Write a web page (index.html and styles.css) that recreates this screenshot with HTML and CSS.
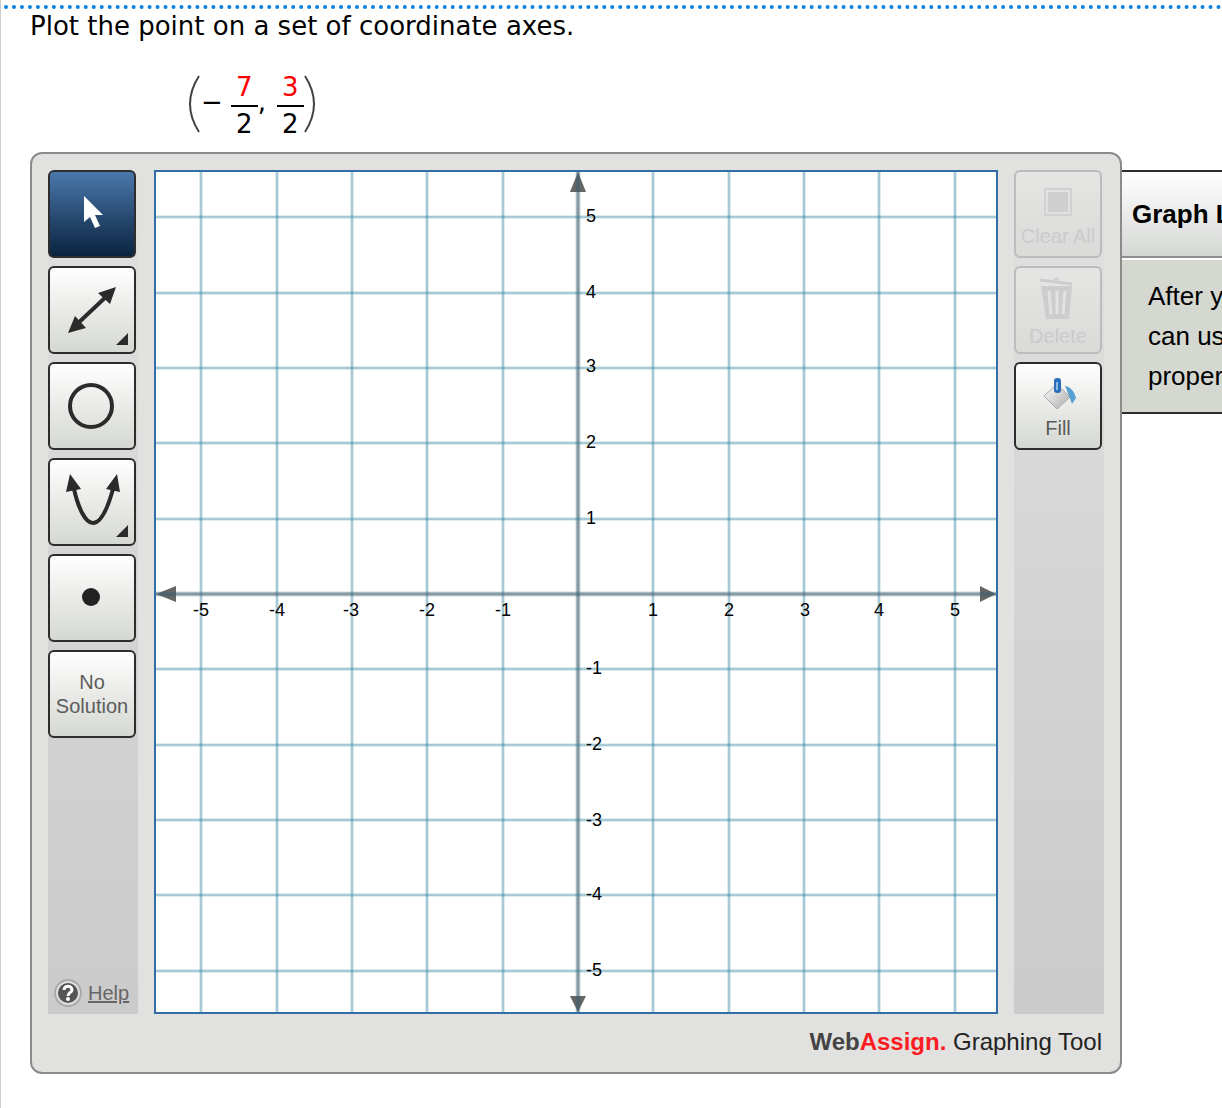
FILE: index.html
```html
<!DOCTYPE html>
<html lang="en">
<head>
<meta charset="utf-8">
<title>Graphing Tool</title>
<link rel="stylesheet" href="styles.css">
</head>
<body>
<main class="question">
  <hr class="rule">
  <p class="prompt">Plot the point on a set of coordinate axes.</p>
  <div class="math">
    <svg class="paren" viewBox="0 0 12 58" aria-hidden="true"><path d="M11 1Q-7 29 11 57" /></svg>
    <span class="sign">−</span>
    <span class="fraction"><span class="num">7</span><span class="den">2</span></span>
    <span class="comma">,</span>
    <span class="fraction"><span class="num">3</span><span class="den">2</span></span>
    <svg class="paren" viewBox="0 0 12 58" aria-hidden="true"><path d="M1 1Q19 29 1 57" /></svg>
  </div>

  <div class="tool">
    <section class="panel">
      <div class="workspace">
        <div class="toolbar">
          <button class="btn selected" type="button" aria-label="Select">
            <svg class="icon" viewBox="0 0 84 84"><path fill="#fff" d="M34 24V50L40 45L45 56L50 54L45 43H53Z"/></svg>
          </button>
          <button class="btn" type="button" aria-label="Line">
            <svg class="icon" viewBox="0 0 84 84"><path stroke="#2b2b2b" stroke-width="4" d="M25 58L59 26"/><path fill="#2b2b2b" d="M66 19L48 25L60 36ZM18 65L25 48L36 60ZM78 65V77H66Z"/></svg>
          </button>
          <button class="btn" type="button" aria-label="Circle">
            <svg class="icon" viewBox="0 0 84 84"><circle cx="41" cy="42" r="21" fill="none" stroke="#2b2b2b" stroke-width="4"/></svg>
          </button>
          <button class="btn" type="button" aria-label="Parabola">
            <svg class="icon" viewBox="0 0 84 84"><path fill="none" stroke="#2b2b2b" stroke-width="4" d="M24 29C28 47 35 63 43 63S58 47 63 29"/><path fill="#2b2b2b" d="M20 14L16 32L31 29ZM67 14L56 29L70 32ZM78 65V77H66Z"/></svg>
          </button>
          <button class="btn" type="button" aria-label="Point">
            <svg class="icon" viewBox="0 0 84 84"><circle cx="41" cy="41" r="9" fill="#222"/></svg>
          </button>
          <button class="btn" type="button">No<br>Solution</button>
          <a class="help" href="#help">
            <svg class="help-icon" viewBox="0 0 28 28" aria-hidden="true">
              <circle cx="14" cy="14" r="13" fill="#ddd" stroke="#aaa" stroke-width="2"/>
              <circle cx="14" cy="14" r="10" fill="#555"/>
              <path fill="none" stroke="#fff" stroke-width="3" d="M10 11C10 6 18 6 18 11C18 14 14 13 14 17"/>
              <circle cx="14" cy="20" r="2" fill="#fff"/>
            </svg>
            <span class="help-text">Help</span>
          </a>
        </div>

        <svg class="graph" viewBox="0 0 840 840" role="img" aria-label="Coordinate axes">
          <defs>
            <path id="columns" d="M45 0V840M121 0V840M196 0V840M271 0V840M347 0V840M497 0V840M573 0V840M648 0V840M723 0V840M799 0V840"/>
            <path id="rows" d="M0 45H840M0 121H840M0 196H840M0 271H840M0 347H840M0 497H840M0 573H840M0 648H840M0 723H840M0 799H840"/>
            <path id="axis-y" d="M422 0V840"/>
            <path id="axis-x" d="M0 422H840"/>
          </defs>
          <use href="#columns" class="grid-soft"/>
          <use href="#columns" class="grid-core"/>
          <path class="heads" d="M422 0L414 20H430ZM422 840L414 824H430ZM0 422L20 414V430ZM840 422L824 414V430Z"/>
          <use href="#axis-y" class="axis-soft"/>
          <use href="#axis-y" class="axis-core"/>
          <use href="#axis-x" class="axis-soft"/>
          <use href="#axis-x" class="axis-core"/>
          <use href="#rows" class="grid-soft"/>
          <use href="#rows" class="grid-core"/>
          <g class="labels labels-x">
            <text x="45" y="444">-5</text><text x="121" y="444">-4</text><text x="195" y="444">-3</text><text x="271" y="444">-2</text><text x="347" y="444">-1</text>
            <text x="497" y="444">1</text><text x="573" y="444">2</text><text x="649" y="444">3</text><text x="723" y="444">4</text><text x="799" y="444">5</text>
          </g>
          <g class="labels">
            <text x="430" y="50">5</text><text x="430" y="126">4</text><text x="430" y="200">3</text><text x="430" y="276">2</text><text x="430" y="352">1</text>
            <text x="430" y="502">-1</text><text x="430" y="578">-2</text><text x="430" y="654">-3</text><text x="430" y="728">-4</text><text x="430" y="804">-5</text>
          </g>
        </svg>

        <div class="toolbar">
          <button class="btn" type="button" disabled>
            <svg class="icon-top" viewBox="0 0 84 52" aria-hidden="true"><rect x="29" y="17" width="26" height="26" fill="none" stroke="#d1d1d1" stroke-width="2"/><rect x="32" y="20" width="20" height="20" fill="#cfcfcf"/></svg>
            Clear All
          </button>
          <button class="btn" type="button" disabled>
            <svg class="icon-top" viewBox="0 0 84 52" aria-hidden="true"><path fill="none" stroke="#cdcdcd" stroke-width="3" d="M24 12L56 16"/><path fill="#cdcdcd" d="M37 11L41 9L43 12L40 13Z"/><path fill="#cdcdcd" d="M25 18H56L53 51H30Z"/><path stroke="#e2e2e2" stroke-width="3" d="M33 23L35 46M41 23V46M49 23L47 46"/></svg>
            <span class="low-label">Delete</span>
          </button>
          <button class="btn" type="button">
            <svg class="icon-top" viewBox="0 0 84 52" aria-hidden="true">
              <defs><linearGradient id="can" x1="0" y1="0" x2="1" y2="1"><stop offset="0" stop-color="#fff"/><stop offset="1" stop-color="#aaa"/></linearGradient></defs>
              <path fill="url(#can)" stroke="#aaa" d="M28 32L41 20L54 33L41 45Z"/>
              <path fill="#5a9fd2" d="M49 22C55 23 58 27 60 34L56 40L53 32Z"/>
              <rect x="38" y="14" width="7" height="15" rx="3" fill="#2a6dba"/><path stroke="#8dbbe8" stroke-width="2" d="M41 18V26"/>
            </svg>
            Fill
          </button>
        </div>
      </div>
      <footer class="brand"><b class="brand-name">Web<span class="brand-red">Assign.</span></b> <span>Graphing Tool</span></footer>
    </section>

    <aside class="layers">
      <h2 class="layers-title">Graph Layers</h2>
      <p class="layers-text">After you add an object to the graph you<br>can use Graph Layers to view and edit its<br>properties.</p>
    </aside>
  </div>
</main>
</body>
</html>
```
FILE: styles.css
```css
* { box-sizing: border-box; }

body {
  margin: 0;
  background: #fff;
  color: #000;
  font-family: "Liberation Sans", Arial, sans-serif;
}

.question {
  min-height: 100vh;
  padding-top: 5px;
  border-left: 1px solid #ccc;
  overflow: hidden;
}

.rule {
  margin: 0 0 0 3px;
  border: 0;
  border-top: 4px dotted #0a80dc;
}

.prompt {
  margin: 0 0 0 29px;
  font: 26px/34px "DejaVu Sans", Verdana, sans-serif;
}

/* Coordinate pair */
.math {
  display: flex;
  align-items: center;
  margin: 27px 0 10px 187px;
  font: 26px/35px "DejaVu Sans", Verdana, sans-serif;
}
.paren {
  width: 12px;
  height: 58px;
  margin-bottom: 4px;
  fill: none;
  stroke: #444;
  stroke-width: 2;
}
.sign { padding: 0 8px 8px 1px; }
.comma { width: 19px; padding-bottom: 8px; }
.fraction {
  display: flex;
  flex-direction: column;
  width: 27px;
  text-align: center;
}
.num {
  color: #f00;
  border-bottom: 2px solid #000;
}

/* Graphing tool */
.tool {
  display: flex;
  align-items: flex-start;
  margin-left: 29px;
}
.panel {
  flex: 1;
  min-width: 0;
  padding: 16px;
  border: 2px solid #8b8b8b;
  border-radius: 12px;
  background: #e1e1df;
}
.workspace {
  display: flex;
  gap: 16px;
}
.toolbar {
  display: flex;
  flex: 0 0 90px;
  flex-direction: column;
  gap: 8px;
  background: linear-gradient(#e1e1df, #d4d4d4 50%, #cbcbcb);
}

.btn {
  display: flex;
  flex-direction: column;
  align-items: center;
  justify-content: center;
  width: 88px;
  height: 88px;
  padding: 0;
  border: 2px solid #2d2d2d;
  border-radius: 6px;
  background: linear-gradient(#fff, #d5d7d1);
  color: #5c5c5c;
  font: 20px/24px "Liberation Sans", Arial, sans-serif;
  white-space: nowrap;
}
.btn.selected { background: linear-gradient(#4a78ab, #0b2340); }
.btn:disabled {
  border-color: #bcbcbc;
  background: linear-gradient(#e5e5e4, #dadad9);
  color: #cbcbcb;
}
.icon { width: 84px; height: 84px; }
.icon-top { flex: none; width: 84px; height: 52px; }
.btn:has(.icon-top) { justify-content: flex-start; }
.low-label { padding-top: 4px; }

.help {
  display: flex;
  align-items: center;
  gap: 6px;
  margin-top: auto;
  padding: 0 0 7px 6px;
  color: #666;
  font-size: 20px;
  line-height: 28px;
}
.help-icon { width: 28px; height: 28px; }

.graph {
  display: block;
  flex: 1;
  min-width: 0;
  border: 2px solid #336ca6;
  background: #fff;
}
.grid-soft { fill: none; stroke: #2f86a8; stroke-width: 4; opacity: .16; }
.grid-core { fill: none; stroke: #2f7f9c; stroke-width: 2; opacity: .32; }
.axis-soft { fill: none; stroke: #3d6070; stroke-width: 5; opacity: .25; }
.axis-core { fill: none; stroke: #3d6070; stroke-width: 3; opacity: .5; }
.heads { fill: #666; }
.labels { font-size: 18px; }
.labels-x { text-anchor: middle; }

.brand {
  margin-top: 14px;
  padding-right: 2px;
  font-size: 24px;
  line-height: 28px;
  text-align: right;
  color: #222;
}
.brand-name { color: #444; }
.brand-red { color: #fc1c22; }

/* Layers list, runs past the window's right edge */
.layers {
  flex: 0 0 100px;
  margin-top: 18px;
  overflow: hidden;
  white-space: nowrap;
}
.layers-title {
  margin: 0 0 2px;
  padding-left: 10px;
  border-top: 2px solid #2d2d2d;
  border-bottom: 2px solid #8d8d8d;
  background: linear-gradient(#fff, #d5d7d5);
  font-size: 26px;
  line-height: 84px;
}
.layers-text {
  margin: 0;
  padding: 16px 0 16px 26px;
  border-bottom: 2px solid #2d2d2d;
  background: #d5d7d1;
  font-size: 26px;
  line-height: 40px;
}
```
